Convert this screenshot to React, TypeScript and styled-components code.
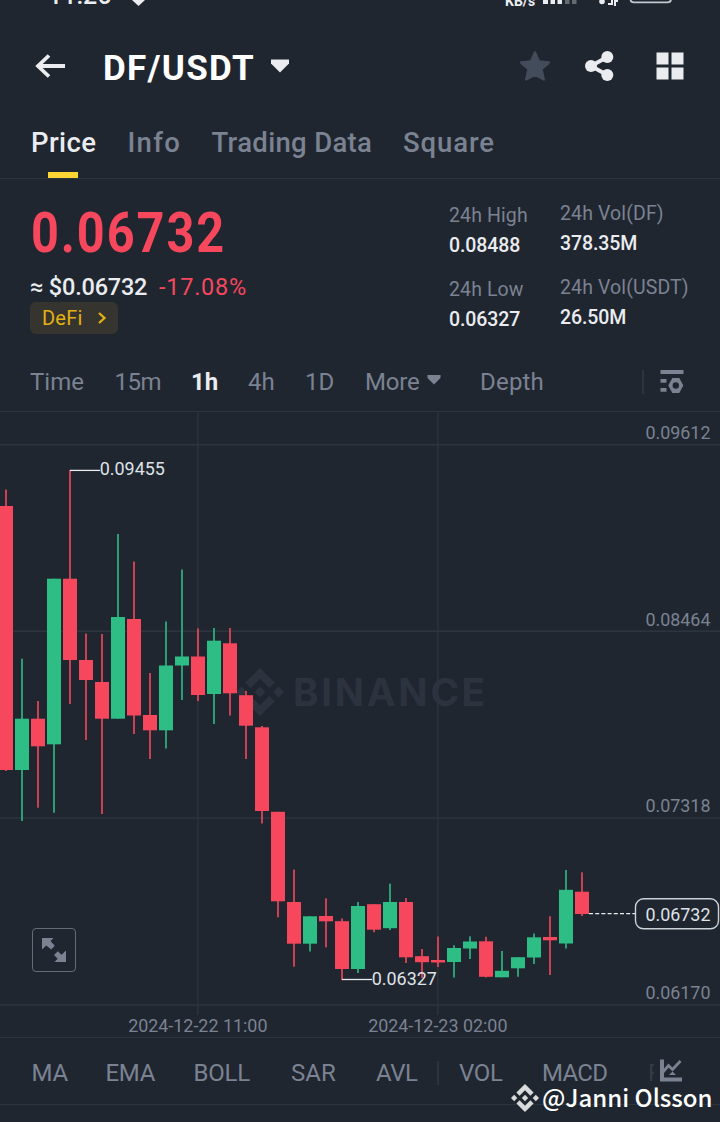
import React from "react";
import styled, { createGlobalStyle } from "styled-components";

const c = {
  bg: "#1f2630",
  line: "#2c343f",
  text: "#eaecef",
  muted: "#7b8291",
  red: "#f6475d",
  green: "#2ebd85",
  yellow: "#fcd535",
};

const Global = createGlobalStyle`
  * { box-sizing: border-box; }
  body { margin: 0; background: ${c.bg}; }
  svg { display: block; flex: none; }
`;

const Screen = styled.main`
  position: relative;
  display: flex;
  flex-direction: column;
  width: 720px;
  height: 1122px;
  overflow: hidden;
  background: ${c.bg};
  color: ${c.text};
  font-family: Roboto, "Liberation Sans", sans-serif;
`;

const StatusBar = styled.div`
  display: flex;
  align-items: flex-start;
  height: 30px;
  overflow: hidden;
  padding-left: 48px;
`;

const Clock = styled.span`
  width: 84px;
  margin-top: -17px;
  font-size: 25px;
  line-height: 26px;
  font-weight: 500;
`;

const NetUnit = styled.span`
  width: 38px;
  margin-left: 360px;
  margin-top: -6px;
  font-size: 14px;
  line-height: 14px;
  font-weight: 700;
`;

const Header = styled.header`
  display: flex;
  align-items: center;
  height: 74px;
  padding: 0 36px 2px 35px;
`;

const Pair = styled.h1`
  margin: 6px 0 0 36px;
  width: 165px;
  padding-left: 1px;
  font-size: 35px;
  line-height: 40px;
  font-weight: 700;
  letter-spacing: 1.3px;
  color: #fff;
  white-space: nowrap;
`;

const Actions = styled.div`
  display: flex;
  align-items: center;
  margin-left: auto;
`;

const Action = styled.span<{ $gap?: number }>`
  margin-right: ${(p) => p.$gap ?? 0}px;
`;

const Tabs = styled.nav`
  display: flex;
  height: 75px;
  padding-left: 31px;
  border-bottom: 1px solid ${c.line};
`;

const Tab = styled.span<{ $w: number; $ls?: number; $active?: boolean }>`
  position: relative;
  width: ${(p) => p.$w}px;
  font-size: 27.5px;
  line-height: 78px;
  font-weight: 500;
  letter-spacing: ${(p) => p.$ls ?? 0}px;
  white-space: nowrap;
  color: ${(p) => (p.$active ? c.text : c.muted)};
  &::after {
    content: "";
    display: ${(p) => (p.$active ? "block" : "none")};
    position: absolute;
    left: 17px;
    bottom: 0;
    width: 30px;
    height: 6px;
    background: ${c.yellow};
  }
`;

const Summary = styled.section`
  display: flex;
  height: 173px;
  padding-left: 30px;
`;

const Quote = styled.div`
  width: 419px;
  padding-top: 26px;
`;

const LastPrice = styled.div`
  padding-left: 1px;
  font-size: 55px;
  line-height: 56px;
  font-weight: 700;
  letter-spacing: 2.2px;
  color: ${c.red};
  transform: scaleX(0.885);
  transform-origin: 0 50%;
`;

const SubQuote = styled.div`
  display: flex;
  margin-top: 12px;
  font-size: 23.5px;
  line-height: 28px;
  font-weight: 500;
  white-space: nowrap;
`;

const Fiat = styled.span`
  width: 129px;
  letter-spacing: -0.2px;
`;

const Change = styled.span`
  font-weight: 400;
  letter-spacing: 0.75px;
  color: ${c.red};
`;

const Tag = styled.span`
  display: flex;
  align-items: center;
  width: 88px;
  height: 32px;
  margin-top: 1px;
  padding: 0 10px 0 12px;
  justify-content: space-between;
  border-radius: 6px;
  background: #35342e;
  color: #e3b112;
  font-size: 20px;
  letter-spacing: 0.2px;
`;

const StatColumn = styled.dl<{ $w: number; $top: number }>`
  width: ${(p) => p.$w}px;
  margin: 0;
  padding-top: ${(p) => p.$top}px;
`;

const StatLabel = styled.dt`
  font-size: 19.5px;
  line-height: 29px;
  letter-spacing: 0.12px;
  color: ${c.muted};
  white-space: nowrap;
`;

const StatValue = styled.dd`
  margin: 0.5px 0 15.5px;
  font-size: 19.5px;
  line-height: 29px;
  font-weight: 500;
  letter-spacing: -0.1px;
`;

const Strip = styled.div<{ $h: number; $left: number; $drop?: number }>`
  display: flex;
  align-items: center;
  height: ${(p) => p.$h}px;
  padding-left: ${(p) => p.$left}px;
  padding-top: ${(p) => p.$drop ?? 0}px;
  border-bottom: 1px solid ${c.line};
`;

const StripItem = styled.span<{ $w: number; $ls?: number; $active?: boolean; $faint?: boolean }>`
  display: flex;
  align-items: center;
  width: ${(p) => p.$w}px;
  flex: none;
  overflow: hidden;
  font-size: 24px;
  line-height: 32px;
  font-weight: ${(p) => (p.$active ? 700 : 400)};
  letter-spacing: ${(p) => p.$ls ?? 0}px;
  color: ${(p) => (p.$active ? c.text : p.$faint ? "#343b47" : c.muted)};
  white-space: nowrap;
`;

const Separator = styled.i<{ $gap: number }>`
  width: 2px;
  height: 24px;
  margin-right: ${(p) => p.$gap}px;
  background: ${c.line};
`;

const ChartPane = styled.section`
  position: relative;
  height: 626px;
  border-bottom: 1px solid ${c.line};
`;

const Expand = styled.button`
  position: absolute;
  left: 32px;
  top: 516px;
  width: 44px;
  height: 44px;
  padding: 0;
  display: grid;
  place-items: center;
  border: 1px solid #646c7a;
  border-radius: 4px;
  background: transparent;
`;

const Signature = styled.div`
  position: absolute;
  left: 511px;
  top: 1079px;
  display: flex;
  align-items: center;
  gap: 3px;
  height: 37px;
  font-family: "Noto Sans CJK SC", "Noto Sans", sans-serif;
  line-height: 36px;
  font-weight: 500;
  color: #fff;
  white-space: nowrap;
`;

const Handle = styled.span`
  margin-top: -1px;
  font-size: 24px;
`;

const BINANCE =
  "M16.624 13.9202l2.7175 2.7154-7.353 7.353-7.353-7.352 2.7175-2.7164 4.6355 4.6595 4.6356-4.6595zm4.6366-4.6366L24 12l-2.7154 2.7164L18.5682 12l2.6924-2.7164zm-9.272.001l2.7163 2.6914-2.7164 2.7174v-.001L9.2721 12l2.7164-2.7154zm-9.2722-.001L5.4088 12l-2.6914 2.6924L0 12l2.7164-2.7164zM11.9885.0115l7.353 7.329-2.7174 2.7154-4.6356-4.6356-4.6355 4.6595-2.7174-2.7154 7.353-7.353z";

type Candle = [number, number, number, number, 0 | 1];

// wick top, body top, body bottom, wick bottom, rising
const CANDLES: Candle[] = [
  [489.5, 506, 770, 771, 0],
  [658.7, 718.7, 770, 821, 1],
  [701, 718.7, 746.3, 807.7, 0],
  [578.7, 578.7, 744.3, 812.7, 1],
  [470, 578.7, 660, 704, 0],
  [633.5, 660, 680, 740, 0],
  [634, 682, 718.7, 814, 0],
  [534, 617, 718.7, 718.7, 1],
  [561.5, 619, 715.5, 734, 0],
  [673, 715, 730.3, 759, 0],
  [621.5, 665.5, 730.3, 748.5, 1],
  [569.5, 656.5, 665.5, 700, 1],
  [628.5, 656.5, 695, 701, 0],
  [628, 640.7, 694, 724, 1],
  [628, 643.3, 693.3, 715.5, 0],
  [691, 695.2, 725.7, 759, 0],
  [726, 727.3, 811, 823.5, 0],
  [811.8, 811.8, 901.3, 917.3, 0],
  [869.5, 902, 943.7, 966.7, 0],
  [916.3, 916.3, 943.7, 951.5, 1],
  [898.3, 916, 921.3, 947.3, 0],
  [918.5, 921.2, 969, 980, 0],
  [902, 906, 969, 973, 1],
  [904.2, 904.2, 929.7, 932.3, 0],
  [883.7, 902, 928.2, 930, 1],
  [898, 902, 957.3, 963, 0],
  [949, 956.2, 962.2, 978, 0],
  [936.5, 960, 962.5, 967, 0],
  [945.3, 948, 962, 977.5, 1],
  [936.3, 941.5, 948.5, 959, 1],
  [936.8, 941.3, 976.8, 977.5, 0],
  [951, 970.8, 977.3, 977.3, 1],
  [957.2, 957.2, 968.3, 976.8, 1],
  [933.5, 937.3, 957.5, 964, 1],
  [916.3, 937, 940.3, 975, 0],
  [870, 889.8, 943.5, 948.5, 1],
  [872.3, 891.7, 914, 916, 0],
];

const ORIGIN = 412;
const LEVELS = [
  { y: 444.7, label: "0.09612", ly: 439 },
  { y: 631.3, label: "0.08464", ly: 626 },
  { y: 818, label: "0.07318", ly: 812 },
  { y: 1005, label: "0.06170", ly: 999 },
];
const TIMES = [
  { x: 197.8, label: "2024-12-22 11:00" },
  { x: 437.8, label: "2024-12-23 02:00" },
];

function CandleChart() {
  return (
    <svg width="720" height="625" viewBox={`0 ${ORIGIN} 720 625`} fontFamily="Roboto, sans-serif" fontSize="17.9">
      {LEVELS.map((l) => (
        <line key={l.label} x1="0" x2="720" y1={l.y} y2={l.y} stroke={c.line} strokeWidth="1.4" />
      ))}
      {TIMES.map((t) => (
        <g key={t.label}>
          <line x1={t.x} x2={t.x} y1="411" y2="1015" stroke={c.line} strokeWidth="1.4" />
          <text x={t.x} y="1032" textAnchor="middle" fill={c.muted}>{t.label}</text>
        </g>
      ))}
      <g fill="#2d333e">
        <path d={BINANCE} transform="translate(236 668) scale(2)" />
        <text x="293" y="706" fontFamily="Inter, sans-serif" fontWeight="700" fontSize="38.5" textLength="192">BINANCE</text>
      </g>
      {CANDLES.map(([wt, bt, bb, wb, up], i) => {
        const x = 6 + i * 16;
        const fill = up ? c.green : c.red;
        return (
          <g key={i} fill={fill}>
            <rect x={x - 1} y={wt} width="2" height={wb - wt} opacity="0.8" />
            <rect x={x - 7} y={bt} width="14" height={bb - bt} />
          </g>
        );
      })}
      <g stroke={c.text} strokeWidth="1.3">
        <line x1="70" x2="100" y1="470.4" y2="470.4" />
        <line x1="342" x2="372" y1="979.5" y2="979.5" />
        <line x1="589" x2="635" y1="913.6" y2="913.6" strokeDasharray="4 2.2" />
      </g>
      <g fill="#dfe2e6">
        <text x="99.8" y="475">0.09455</text>
        <text x="371.8" y="985">0.06327</text>
      </g>
      <rect x="635.5" y="898.8" width="83" height="30" rx="8" fill={c.bg} stroke="#cdd1d7" strokeWidth="1.4" />
      <text x="645.4" y="921" fill="#dfe2e6">0.06732</text>
      {LEVELS.map((l) => (
        <text key={l.label} x="645.4" y={l.ly} fill={c.muted}>{l.label}</text>
      ))}
    </svg>
  );
}

export default function App() {
  return (
    <Screen>
      <Global />
      <StatusBar>
        <Clock>11:26</Clock>
        <svg width="13" height="6" viewBox="0 0 13 6"><path d="M0 0H13L6.5 6Z" fill={c.text} /></svg>
        <NetUnit>KB/s</NetUnit>
        <svg width="130" height="8" viewBox="543 0 130 8">
          <g fill={c.text}>
            <rect x="543" y="0" width="5" height="4" />
            <rect x="550.5" y="0" width="4.5" height="4" />
            <rect x="557.5" y="0" width="4.5" height="4" />
            <rect x="565" y="0" width="4.5" height="4" opacity="0.35" />
            <rect x="572" y="0" width="4.5" height="4" opacity="0.35" />
            <circle cx="602" cy="1.5" r="2.8" />
            <path d="M608 3h3V0h2v5h-5zM614 0h4v2h-2v4h-2z" />
          </g>
          <path d="M630.5 -6v5q0 3.3 3.5 3.3h33.5q3.5 0 3.5-3.3v-5" fill="none" stroke="#c4c8ce" strokeWidth="1.8" />
        </svg>
      </StatusBar>

      <Header>
        <svg width="31" height="24" viewBox="0 0 31 24" fill="none" stroke={c.text} strokeWidth="3.8">
          <path d="M30 12H3M14 1.5L3 12L14 22.5" />
        </svg>
        <Pair>DF/USDT</Pair>
        <svg width="22" height="14" viewBox="0 0 22 14"><path d="M4 0.5H22V4.5L13 13.5L4 4.5Z" fill={c.text} /></svg>
        <Actions>
          <Action $gap={32.5}>
            <svg width="32" height="32" viewBox="0 0 32 32">
              <path
                d="M16 2.5L20 11.5L30 12.5L22.5 19.2L24.8 29.5L16 24.6L7.2 29.5L9.5 19.2L2 12.5L12 11.5Z"
                fill="#434c5a" stroke="#434c5a" strokeWidth="2.4" strokeLinejoin="round"
              />
            </svg>
          </Action>
          <Action $gap={42.5}>
            <svg width="30" height="32" viewBox="0 0 30 32" fill={c.text}>
              <path d="M23.3 7L7 16L23.3 25" fill="none" stroke={c.text} strokeWidth="4" />
              <circle cx="23.3" cy="7" r="6" /><circle cx="7" cy="16" r="6" /><circle cx="23.3" cy="25" r="6" />
            </svg>
          </Action>
          <Action>
            <svg width="28" height="28" viewBox="0 0 28 28" fill={c.text}>
              <path d="M.5.5h12v12H.5zM15.500.5h12v12h-12zM.5 15.5h12v12H.5zM15.5 15.5h12v12h-12z" />
            </svg>
          </Action>
        </Actions>
      </Header>

      <Tabs>
        <Tab $w={96.5} $ls={0.4} $active>Price</Tab>
        <Tab $w={84} $ls={1.3}>Info</Tab>
        <Tab $w={191.5} $ls={0.32}>Trading Data</Tab>
        <Tab $w={100} $ls={0.9}>Square</Tab>
      </Tabs>

      <Summary>
        <Quote>
          <LastPrice>0.06732</LastPrice>
          <SubQuote>
            <Fiat>≈ $0.06732</Fiat>
            <Change>-17.08%</Change>
          </SubQuote>
          <Tag>
            DeFi
            <svg width="10" height="12" viewBox="0 0 10 12" fill="none" stroke="#e3b112" strokeWidth="2.3"><path d="M1 1L6.5 6L1 11" /></svg>
          </Tag>
        </Quote>
        <StatColumn $w={111} $top={22}>
          <StatLabel>24h High</StatLabel>
          <StatValue>0.08488</StatValue>
          <StatLabel>24h Low</StatLabel>
          <StatValue>0.06327</StatValue>
        </StatColumn>
        <StatColumn $w={150} $top={20}>
          <StatLabel>24h Vol(DF)</StatLabel>
          <StatValue>378.35M</StatValue>
          <StatLabel>24h Vol(USDT)</StatLabel>
          <StatValue>26.50M</StatValue>
        </StatColumn>
      </Summary>

      <Strip $h={60} $left={30}>
        <StripItem $w={84.5}>Time</StripItem>
        <StripItem $w={76.5} $ls={-0.5}>15m</StripItem>
        <StripItem $w={57} $active>1h</StripItem>
        <StripItem $w={57}>4h</StripItem>
        <StripItem $w={60}>1D</StripItem>
        <StripItem $w={115} $ls={-0.2}>
          More
          <svg width="22" height="10" viewBox="0 0 22 10" style={{ marginTop: -4 }}><path d="M8.5 0H21.5V3L15 9.5L8.5 3Z" fill={c.muted} /></svg>
        </StripItem>
        <StripItem $w={162} $ls={0.2}>Depth</StripItem>
        <Separator $gap={16} />
        <svg width="25" height="24" viewBox="0 0 25 24" fill={c.muted}>
          <path d="M.5 0h23v4H.5zM.5 9h6v3.7H.5zM.5 18h6v3.7H.5z" />
          <path fillRule="evenodd" d="M12.3 8h7l4 7.5-4 7.5h-7l-4-7.5zM15.8 12.3a3.2 3.2 0 1 0 0 6.4a3.2 3.2 0 1 0 0-6.4z" />
        </svg>
      </Strip>

      <ChartPane>
        <CandleChart />
        <Expand aria-label="Expand chart">
          <svg width="26" height="26" viewBox="0 0 26 26" fill={c.muted}>
            <path d="M1 1h11.500l-3 3 4.300 4.800-3.600 3.800L5.200 8.500 1 12.500z" />
            <path d="M25 25H13.500l3.200-3.200-3.700-3.700 3.800-3.800 3.800 3.500L25 13.500z" />
          </svg>
        </Expand>
      </ChartPane>

      <Strip $h={67} $left={31.5} $drop={3}>
        <StripItem $w={74} $ls={-0.2}>MA</StripItem>
        <StripItem $w={88} $ls={-0.3}>EMA</StripItem>
        <StripItem $w={97.5} $ls={-0.2}>BOLL</StripItem>
        <StripItem $w={85}>SAR</StripItem>
        <StripItem $w={61} $ls={-0.4}>AVL</StripItem>
        <Separator $gap={20} />
        <StripItem $w={83} $ls={-0.3}>VOL</StripItem>
        <StripItem $w={106} $ls={-0.7}>MACD</StripItem>
        <StripItem $w={6} $faint>R</StripItem>
        <svg width="26" height="24" viewBox="0 0 26 24" style={{ marginLeft: 4.5, marginTop: -3 }}>
          <path d="M1 0.5H5V18.500H23V22.5H1Z" fill={c.muted} />
          <path d="M4 13L9.5 6.500L13.500 10.500L21.500 2" fill="none" stroke={c.muted} strokeWidth="2.8" />
          <path d="M10 16L13.500 12.500L17 16Z" fill={c.muted} />
        </svg>
      </Strip>

      <Signature>
        <svg width="28" height="28" viewBox="0 0 24 24"><path d={BINANCE} fill="#d9dadc" /></svg>
        <Handle>@Janni Olsson</Handle>
      </Signature>
    </Screen>
  );
}
